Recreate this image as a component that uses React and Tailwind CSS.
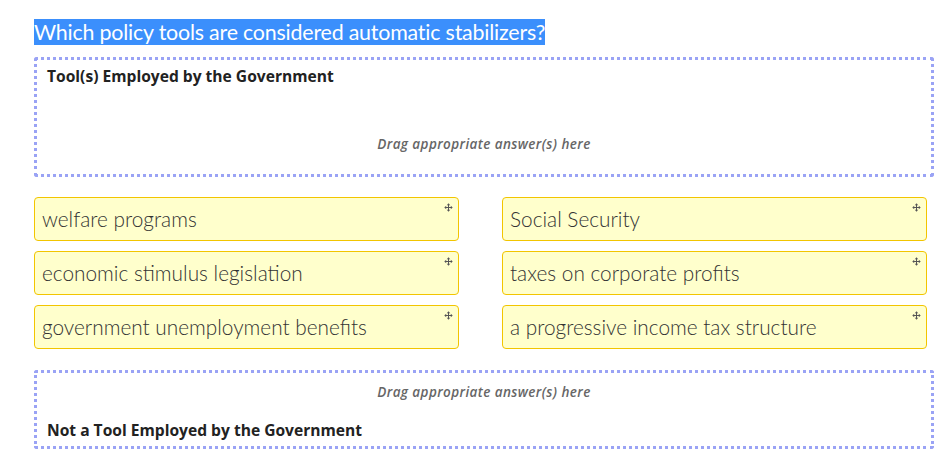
import React from "react";

const font = { fontFamily: '"Source Sans Pro", Lato, "Open Sans", sans-serif' };
const openSans = { fontFamily: '"Open Sans", Lato, sans-serif' };

function MoveIcon() {
  return (
    <svg width="9" height="9" viewBox="0 0 9 9" className="absolute right-[5px] top-[5px]">
      <g stroke="#555" strokeWidth="1" fill="#555">
        <line x1="4.5" y1="1.5" x2="4.5" y2="7.5" />
        <line x1="1.5" y1="4.5" x2="7.5" y2="4.5" />
        <path d="M2.8 2.2 L4.5 0.3 L6.2 2.2 Z" stroke="none" />
        <path d="M2.8 6.8 L4.5 8.7 L6.2 6.8 Z" stroke="none" />
        <path d="M2.2 2.8 L0.3 4.5 L2.2 6.2 Z" stroke="none" />
        <path d="M6.8 2.8 L8.7 4.5 L6.8 6.2 Z" stroke="none" />
      </g>
    </svg>
  );
}

function Card({ children }) {
  return (
    <div className="relative h-[44px] rounded-[4px] border border-[#f2c500] bg-[#ffffcc] pl-[7px] flex items-center">
      <span className="text-[20.8px] font-light text-[#333] leading-none pt-[1px]">{children}</span>
      <MoveIcon />
    </div>
  );
}

export default function App() {
  const left = ["welfare programs", "economic stimulus legislation", "government unemployment benefits"];
  const right = ["Social Security", "taxes on corporate profits", "a progressive income tax structure"];
  return (
    <div className="w-[945px] h-[467px] bg-white overflow-hidden" style={font}>
      <div className="pl-[34px] pr-[11px] pt-[19px]">
        <div className="flex">
          <span className="bg-[#3b8ffc] text-white text-[21.4px] leading-[26px] h-[26px] px-0 tracking-[-0.2px]">
            Which policy tools are considered automatic stabilizers?
          </span>
        </div>
        <div className="mt-[12px] h-[120px] rounded-[3px] border-[3px] border-dotted border-[#9aa3f5] flex flex-col px-[10px]">
          <div className="text-[15.6px] font-bold text-[#222] mt-[6px] leading-[20px]" style={openSans}>
            Tool(s) Employed by the Government
          </div>
          <div className="mt-[50px] text-center text-[13.5px] italic font-semibold text-[#666] leading-[16px] tracking-[0.4px]" style={openSans}>
            Drag appropriate answer(s) here
          </div>
        </div>
        <div className="mt-[20px] w-[893px] grid grid-cols-2 gap-x-[43px] gap-y-[10px]">
          {left.map((l, i) => (
            <React.Fragment key={i}>
              <Card>{l}</Card>
              <Card>{right[i]}</Card>
            </React.Fragment>
          ))}
        </div>
        <div className="mt-[21px] h-[79px] rounded-[3px] border-[3px] border-dotted border-[#9aa3f5] flex flex-col px-[10px]">
          <div className="mt-[11px] text-center text-[13.5px] italic font-semibold text-[#666] leading-[16px] tracking-[0.4px]" style={openSans}>
            Drag appropriate answer(s) here
          </div>
          <div className="mt-[20px] text-[15.6px] font-bold text-[#222] leading-[20px]" style={openSans}>
            Not a Tool Employed by the Government
          </div>
        </div>
      </div>
    </div>
  );
}
